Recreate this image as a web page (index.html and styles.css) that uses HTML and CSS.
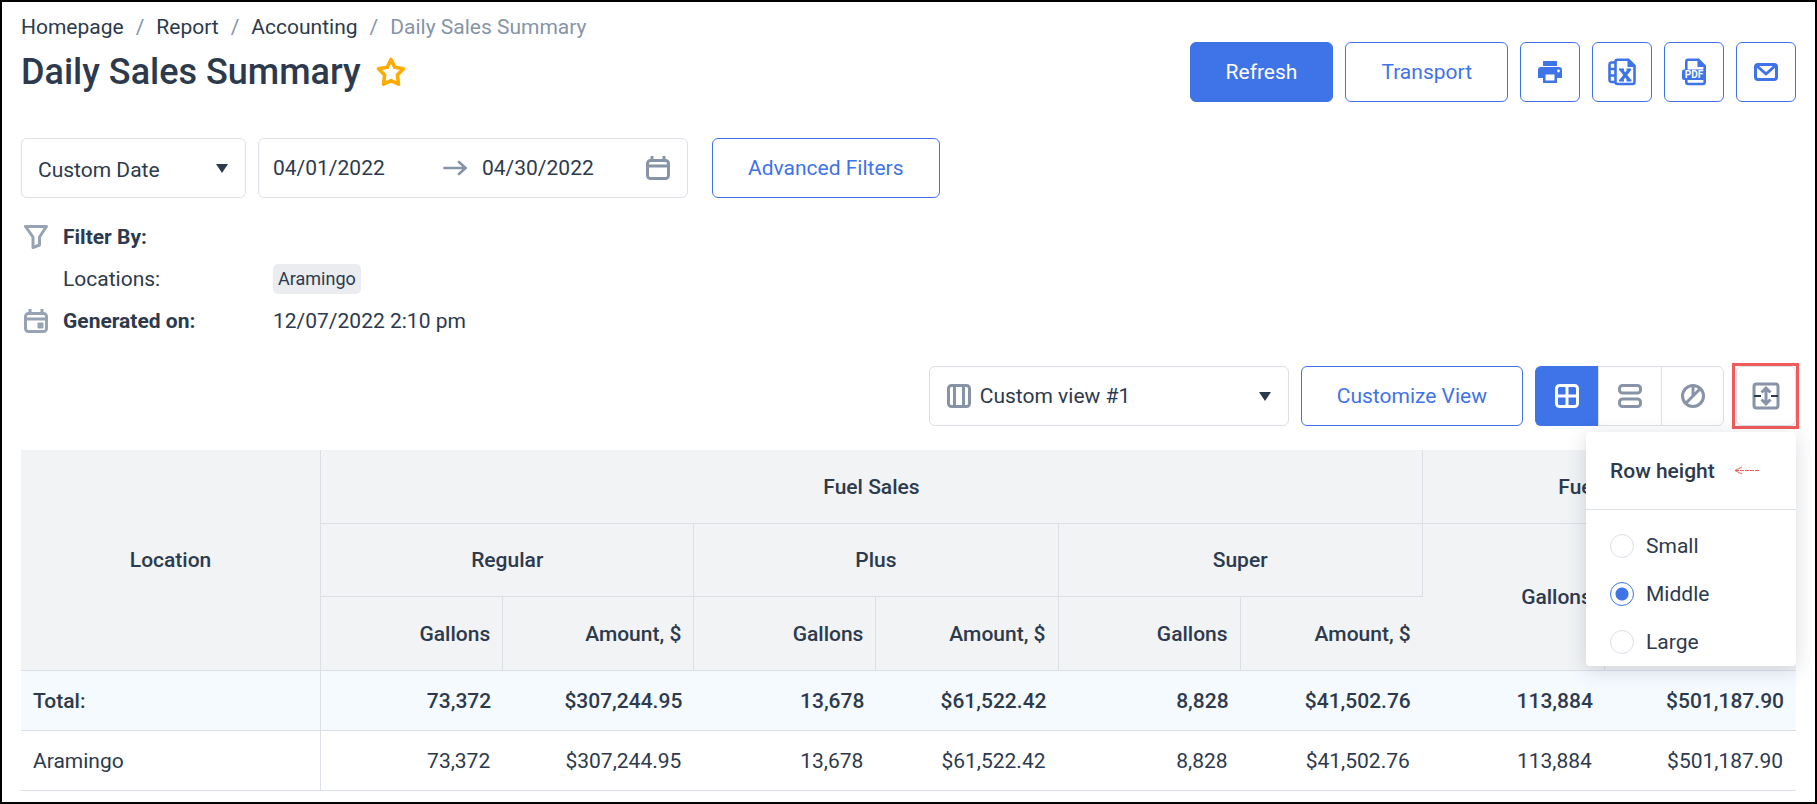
FILE: index.html
```
<!DOCTYPE html>
<html lang="en">
  <head>
    <meta charset="UTF-8">
    <meta name="viewport" content="width=device-width, initial-scale=1.0">
    <title>Daily Sales Summary</title>
    <link rel="stylesheet" href="styles.css">
  </head>
  <body>
    <div class="page">
      <header class="page-header">
        <div>
          <nav class="breadcrumb" aria-label="Breadcrumb">
            <a href="#">Homepage</a><span class="sep">/</span><a href="#">Report</a><span class="sep">/</span><a href="#">Accounting</a><span class="sep">/</span><span class="current">Daily Sales Summary</span>
          </nav>
          <div class="title-row">
            <h1>Daily Sales Summary</h1>
            <button type="button" class="star-btn" aria-label="Add to favorites">
              <svg width="32" height="32" viewBox="0 0 32 32" fill="none" stroke="#ffab00" stroke-width="3.6" stroke-linejoin="round"><path d="M16 3.500l3.700 7.700 8.800 1.600-6.100 6.200 1.100 9.200-7.500-3.600-7.500 3.600 1.100-9.200-6.100-6.200 8.800-1.600z"/></svg>
            </button>
          </div>
        </div>
        <div class="actions">
          <button type="button" class="btn primary">Refresh</button>
          <button type="button" class="btn">Transport</button>
          <button type="button" class="btn icon" aria-label="Print">
            <svg width="30" height="30" viewBox="0 0 30 30" fill="#3f73e8"><path d="M8 4h14v5H8zM6 10h18a3 3 0 0 1 3 3v8h-5v5H8v-5H3v-8a3 3 0 0 1 3-3z"/><path d="M10.500 17.500h9v6h-9z" fill="#fff"/><circle cx="23.500" cy="14" r="1.400" fill="#fff"/></svg>
          </button>
          <button type="button" class="btn icon" aria-label="Export to Excel">
            <svg width="30" height="30" viewBox="0 0 30 30" fill="none" stroke="#3f73e8" stroke-width="2.600"><path d="M9 5.500H4a2 2 0 0 0-1.500 2v15.500a2 2 0 0 0 1.500 2h5M2 12h7M2 18.500h7"/><path d="M11 2.800h10.500l6 6V25a2 2 0 0 1-2 2H10.500a2 2 0 0 1-2-2V4.800a2 2 0 0 1 2-2z"/><path d="M20.500 2v8H28.500z" fill="#3f73e8" stroke="none"/><path d="M14 12.500l8.500 11M22.500 12.500l-8.500 11" stroke-width="3.200"/><path d="M12 12.500h5M19.500 12.500h4.500M12 23.500h5M19.500 23.500h5" stroke-width="2"/></svg>
          </button>
          <button type="button" class="btn icon" aria-label="Export to PDF">
            <svg width="30" height="30" viewBox="0 0 30 30" fill="none" stroke="#3f73e8" stroke-width="2.600"><path d="M7.300 12V4.800a2 2 0 0 1 2-2h10.200l6.200 6.200v16a2 2 0 0 1-2 2H9.300a2 2 0 0 1-2-2z"/><path d="M18.500 2v8h8z" fill="#3f73e8" stroke="none"/><rect x="3" y="12.500" width="24" height="10.500" rx="2" fill="#3f73e8" stroke="none"/><text x="15" y="21" class="pdf-label" text-anchor="middle">PDF</text></svg>
          </button>
          <button type="button" class="btn icon" aria-label="Send by email">
            <svg width="30" height="30" viewBox="0 0 30 30" fill="none" stroke="#3f73e8" stroke-width="3" stroke-linejoin="round"><rect x="4.500" y="7.500" width="21" height="15" rx="2.500"/><path d="M5.500 8.500L15 17l9.500-8.500"/></svg>
          </button>
        </div>
      </header>

      <form class="filters">
        <div class="select-box period">
          <select aria-label="Period"><option>Custom Date</option></select>
          <svg class="caret" width="12" height="9" viewBox="0 0 12 9" fill="#2d3a4d"><path d="M0 0h12L6 9z"/></svg>
        </div>
        <div class="date-range">
          <input type="text" class="from" value="04/01/2022" aria-label="Start date">
          <svg width="24" height="24" viewBox="0 0 24 24" fill="none" stroke="#8794a7" stroke-width="2.600" stroke-linecap="round"><path d="M1.500 12h20M16 6l6.500 6-6.500 6"/></svg>
          <input type="text" class="to" value="04/30/2022" aria-label="End date">
          <svg width="24" height="24" viewBox="0 0 24 24" fill="none" stroke="#8794a7" stroke-width="3"><rect x="1.500" y="4.500" width="21" height="18" rx="3"/><path d="M1.500 10h21M6 0v4M18 0v4"/></svg>
        </div>
        <button type="button" class="btn advanced">Advanced Filters</button>
      </form>

      <dl class="meta">
        <dt class="strong">
          <svg width="24" height="24" viewBox="0 0 24 24" fill="none" stroke="#97a2b5" stroke-width="3" stroke-linejoin="round"><path d="M1.500 1.500h21L15.500 12v8L9 22.500V12z"/></svg>
          Filter By:
        </dt>
        <dd></dd>
        <dt>Locations:</dt>
        <dd><span class="tag">Aramingo</span></dd>
        <dt class="strong">
          <svg width="24" height="24" viewBox="0 0 24 24" fill="none" stroke="#97a2b5" stroke-width="3"><rect x="1.500" y="4.500" width="21" height="18" rx="3"/><path d="M1.500 10h21M6 0v4M18 0v4"/><rect x="13.500" y="13.500" width="6" height="6" rx="1" fill="#97a2b5" stroke="none"/></svg>
          Generated on:
        </dt>
        <dd>12/07/2022 2:10 pm</dd>
      </dl>

      <div class="toolbar">
        <div class="select-box view">
          <svg class="lead" width="24" height="24" viewBox="0 0 24 24" fill="none" stroke="#8794a7" stroke-width="3"><rect x="1.500" y="1.500" width="21" height="21" rx="3"/><path d="M7.500 2v20M16.500 2v20"/></svg>
          <select aria-label="View"><option>Custom view #1</option></select>
          <svg class="caret" width="12" height="9" viewBox="0 0 12 9" fill="#2d3a4d"><path d="M0 0h12L6 9z"/></svg>
        </div>
        <button type="button" class="btn">Customize View</button>
        <div class="segments">
          <button type="button" class="active" aria-label="Table">
            <svg width="24" height="24" viewBox="0 0 24 24" fill="none" stroke="#fff" stroke-width="3"><rect x="1.500" y="1.500" width="21" height="21" rx="3"/><path d="M12 2v20M2 12h20"/></svg>
          </button>
          <button type="button" aria-label="List">
            <svg width="24" height="24" viewBox="0 0 24 24" fill="none" stroke="#8794a7" stroke-width="3"><rect x="1.500" y="1.500" width="21" height="7.500" rx="3"/><rect x="1.500" y="15" width="21" height="7.500" rx="3"/></svg>
          </button>
          <button type="button" aria-label="Chart">
            <svg width="24" height="24" viewBox="0 0 24 24" fill="none" stroke="#8794a7" stroke-width="3"><circle cx="12" cy="12" r="10.500"/><path d="M12 2v10M4.500 19.500l15-15"/></svg>
          </button>
        </div>
        <div class="row-height">
          <button type="button" class="height-btn" aria-label="Row height" aria-expanded="true">
            <svg width="28" height="28" viewBox="0 0 28 28" fill="none" stroke="#8794a7" stroke-width="3"><rect x="2" y="2" width="24" height="24" rx="2.500"/><path d="M14 7v14M9.500 10.500L14 6l4.500 4.500M9.500 17.500L14 22l4.500-4.500"/><path d="M2 14h7M19 14h7" stroke="#2d3a4d" stroke-width="2"/></svg>
          </button>
          <div class="popup">
            <div class="popup-title">
              Row height
              <svg width="25" height="9" viewBox="0 0 25 9" fill="none" stroke="#f15b5b"><path d="M1 4.500h24" stroke-dasharray="4 1"/><path d="M8 1L1 4.500 8 8"/></svg>
            </div>
            <div class="options">
              <label><input type="radio" name="height">Small</label>
              <label><input type="radio" name="height" checked>Middle</label>
              <label><input type="radio" name="height">Large</label>
            </div>
          </div>
        </div>
      </div>

      <table>
        <colgroup>
          <col class="c-location"><col class="c-num"><col class="c-wide"><col class="c-num"><col class="c-num"><col class="c-num"><col class="c-num"><col class="c-num"><col class="c-wide">
        </colgroup>
        <thead>
          <tr>
            <th rowspan="3">Location</th>
            <th colspan="6">Fuel Sales</th>
            <th colspan="2">Fuel Totals</th>
          </tr>
          <tr>
            <th colspan="2">Regular</th>
            <th colspan="2">Plus</th>
            <th colspan="2">Super</th>
            <th rowspan="2" class="num">Gallons</th>
            <th rowspan="2" class="num">Amount, $</th>
          </tr>
          <tr>
            <th class="num">Gallons</th>
            <th class="num">Amount, $</th>
            <th class="num">Gallons</th>
            <th class="num">Amount, $</th>
            <th class="num">Gallons</th>
            <th class="num last">Amount, $</th>
          </tr>
        </thead>
        <tbody>
          <tr class="total">
            <td>Total:</td>
            <td>73,372</td>
            <td>$307,244.95</td>
            <td>13,678</td>
            <td>$61,522.42</td>
            <td>8,828</td>
            <td>$41,502.76</td>
            <td>113,884</td>
            <td>$501,187.90</td>
          </tr>
          <tr>
            <td>Aramingo</td>
            <td>73,372</td>
            <td>$307,244.95</td>
            <td>13,678</td>
            <td>$61,522.42</td>
            <td>8,828</td>
            <td>$41,502.76</td>
            <td>113,884</td>
            <td>$501,187.90</td>
          </tr>
        </tbody>
      </table>
    </div>
  </body>
</html>
```
FILE: styles.css
```
* { box-sizing: border-box; }
body { margin: 0; background: #fff; color: #2d3a4d; font-family: Roboto, sans-serif; font-size: 21px; line-height: 24px; }
button, input, select { font: inherit; color: inherit; }
svg { display: block; flex: none; }

.page { min-height: 100vh; padding: 12px 19px 10px; border: 2px solid #000; }

/* header */
.page-header { display: flex; justify-content: space-between; align-items: flex-start; }
.breadcrumb { line-height: 26px; }
.breadcrumb a { color: #2d3a4d; text-decoration: none; }
.breadcrumb .sep { margin: 0 12px; color: #8794a7; }
.breadcrumb .current { color: #8794a7; }
.title-row { display: flex; align-items: center; gap: 14px; margin-top: 8px; }
h1 { margin: 0; font-size: 36px; line-height: 48px; font-weight: 500; }
.star-btn { padding: 0; border: 0; background: none; cursor: pointer; }
.actions { display: flex; gap: 12px; margin-top: 28px; }

.btn { height: 60px; padding: 0 35px; border: 1px solid #3f73e8; border-radius: 6px; background: #fff; color: #3f73e8; white-space: nowrap; cursor: pointer; }
.btn.primary { background: #3f73e8; color: #fff; }
.btn.icon { display: flex; align-items: center; justify-content: center; width: 60px; padding: 0; }
.pdf-label { fill: #fff; stroke: none; font-size: 10px; font-weight: 700; }

/* filters */
.filters { display: flex; gap: 12px; margin-top: 36px; }
.select-box { position: relative; display: flex; align-items: center; height: 60px; border: 1px solid #dcdfe6; border-radius: 6px; }
.select-box select { width: 100%; height: 100%; padding: 0 40px 0 16px; border: 0; border-radius: 6px; background: none; appearance: none; }
.select-box .caret { position: absolute; right: 17px; pointer-events: none; }
.period { width: 225px; }
.period select { padding-top: 3px; }
.date-range { display: flex; align-items: center; width: 430px; height: 60px; padding: 0 17px 0 14px; border: 1px solid #dcdfe6; border-radius: 6px; }
.date-range input { min-width: 0; padding: 0; border: 0; background: none; }
.date-range .from { width: 170px; }
.date-range .to { flex: 1; margin-left: 15px; }
.advanced { margin-left: 12px; }

/* report info */
.meta { display: grid; grid-template-columns: 252px 1fr; grid-auto-rows: 42px; align-items: center; margin: 18px 0 0; }
.meta dt { display: flex; align-items: center; gap: 15px; padding-left: 42px; }
.meta dt.strong { padding-left: 3px; font-weight: 700; }
.meta dd { margin: 0; }
.tag { display: inline-block; padding: 3px 5px; border-radius: 5px; background: #ebecf0; font-size: 18px; }

/* table toolbar */
.toolbar { display: flex; justify-content: flex-end; gap: 12px; margin-top: 24px; }
.view { width: 360px; }
.view .lead { position: absolute; left: 17px; pointer-events: none; }
.view select { padding-left: 50px; }
.segments { display: flex; height: 60px; }
.segments button { display: flex; align-items: center; justify-content: center; width: 63px; padding: 0; border: 1px solid #dcdfe6; border-right-width: 0; background: #fff; cursor: pointer; }
.segments button:first-child { border-radius: 6px 0 0 6px; }
.segments button:last-child { border-right-width: 1px; border-radius: 0 6px 6px 0; }
.segments .active { border-color: #3f73e8; background: #3f73e8; }
.row-height { position: relative; }
.height-btn { display: flex; align-items: center; justify-content: center; width: 60px; height: 60px; padding: 0; border: 1px solid #dcdfe6; border-radius: 6px; background: #fff; cursor: pointer; }
/* red highlight round the open control */
.row-height::after { content: ""; position: absolute; inset: -3px -3px -3px -4px; border: 3px solid #f15b5b; pointer-events: none; }

.popup { position: absolute; top: 66px; right: 0; z-index: 1; width: 210px; border-radius: 4px; background: #fff; box-shadow: 0 4px 20px rgba(45, 58, 77, 0.18); }
.popup-title { display: flex; align-items: center; gap: 19px; height: 78px; padding: 0 24px; border-bottom: 1px solid #dcdfe6; font-weight: 500; white-space: nowrap; }
.options { padding: 12px 24px 0; }
.options label { display: flex; align-items: center; gap: 12px; height: 48px; }
.options input { width: 24px; height: 24px; margin: 0; border: 1px solid #dcdfe6; border-radius: 50%; appearance: none; }
.options input:checked { border-color: #3f73e8; background: radial-gradient(circle, #3f73e8 6px, #fff 7px); }

/* report table */
table { width: 100%; margin-top: 24px; border-collapse: separate; border-spacing: 0; table-layout: fixed; }
.c-location { width: 300px; }
.c-num { width: 182px; }
.c-wide { width: 191px; }
th { height: 74px; padding: 0 12px; border-right: 1px solid #dcdfe6; border-bottom: 1px solid #dcdfe6; background: #f1f3f5; font-weight: 500; }
tr:nth-child(2) th { height: 73px; }
th.num { text-align: right; }
th.last, tr:first-child th:last-child, tr:nth-child(2) th:last-child { border-right: 0; }
td { height: 60px; padding: 0 13px 0 12px; border-bottom: 1px solid #dcdfe6; text-align: right; }
td:first-child { border-right: 1px solid #dcdfe6; text-align: left; }
.total td { padding-right: 12px; background: #f5faff; font-weight: 500; }
```
